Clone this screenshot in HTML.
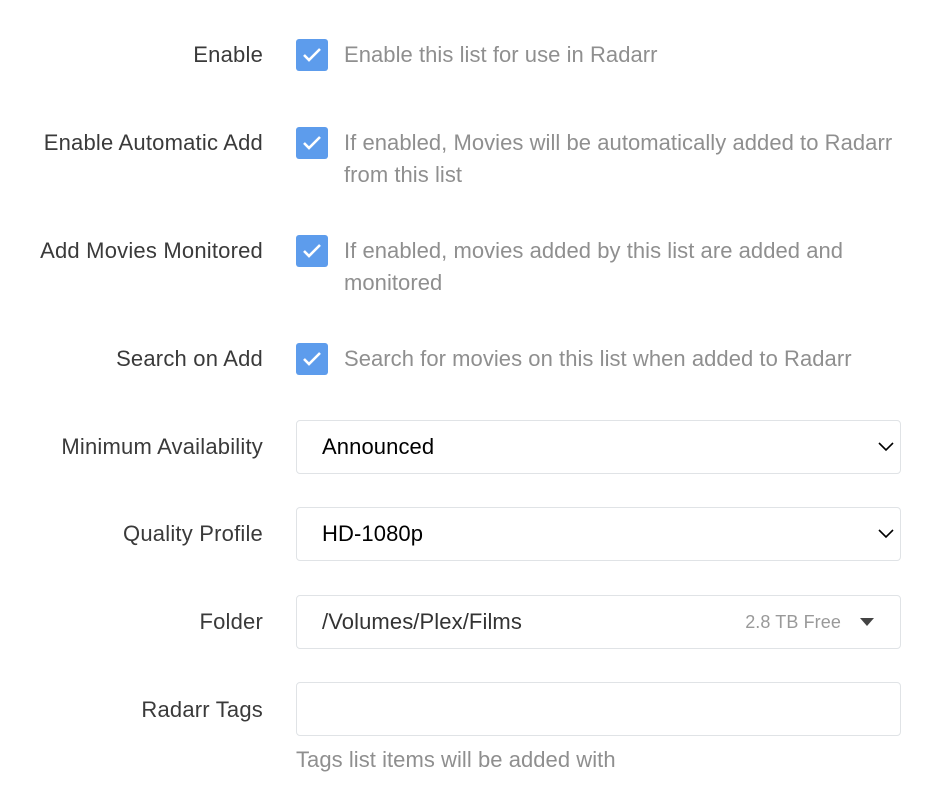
<!DOCTYPE html>
<html><head><style>
body{margin:0;background:#fff;font-family:"Liberation Sans",sans-serif;width:949px;height:800px;position:relative;overflow:hidden}
.l{position:absolute;right:686px;font-size:22px;letter-spacing:0.2px;color:#3a3a3a;line-height:32px;white-space:nowrap}
.cb{position:absolute;left:296px;width:32px;height:32px;border-radius:3px;background:#5d9cec}
.cb svg{position:absolute;left:6px;top:7px}
.t{position:absolute;left:344px;font-size:22px;letter-spacing:0.05px;color:#8f8f8f;line-height:32px;width:580px}
.in{position:absolute;left:296px;width:603px;height:52px;border:1px solid #e0e3e6;border-radius:4px;box-sizing:content-box}
.in span{position:absolute;left:25px;top:10px;font-size:22px;letter-spacing:0.1px;line-height:32px;color:#000}
.ch{position:absolute;right:6px;top:21px}
</style></head><body>
<div class="l" style="top:39px">Enable</div>
<div class="cb" style="top:39px"><svg width="20" height="18" viewBox="0 0 20 18"><path d="M2 9l5 5 11-11" fill="none" stroke="#fff" stroke-width="2.6"/></svg></div>
<div class="t" style="top:39px">Enable this list for use in Radarr</div>

<div class="l" style="top:127px">Enable Automatic Add</div>
<div class="cb" style="top:127px"><svg width="20" height="18" viewBox="0 0 20 18"><path d="M2 9l5 5 11-11" fill="none" stroke="#fff" stroke-width="2.6"/></svg></div>
<div class="t" style="top:127px">If enabled, Movies will be automatically added to Radarr<br>from this list</div>

<div class="l" style="top:235px">Add Movies Monitored</div>
<div class="cb" style="top:235px"><svg width="20" height="18" viewBox="0 0 20 18"><path d="M2 9l5 5 11-11" fill="none" stroke="#fff" stroke-width="2.6"/></svg></div>
<div class="t" style="top:235px">If enabled, movies added by this list are added and<br>monitored</div>

<div class="l" style="top:343px">Search on Add</div>
<div class="cb" style="top:343px"><svg width="20" height="18" viewBox="0 0 20 18"><path d="M2 9l5 5 11-11" fill="none" stroke="#fff" stroke-width="2.6"/></svg></div>
<div class="t" style="top:343px">Search for movies on this list when added to Radarr</div>

<div class="l" style="top:431px">Minimum Availability</div>
<div class="in" style="top:420px"><span>Announced</span><svg class="ch" width="16" height="10" viewBox="0 0 16 10"><path d="M1 1l7 7 7-7" fill="none" stroke="#000" stroke-width="1.6"/></svg></div>

<div class="l" style="top:518px">Quality Profile</div>
<div class="in" style="top:507px"><span>HD-1080p</span><svg class="ch" width="16" height="10" viewBox="0 0 16 10"><path d="M1 1l7 7 7-7" fill="none" stroke="#000" stroke-width="1.6"/></svg></div>

<div class="l" style="top:606px">Folder</div>
<div class="in" style="top:595px"><span style="color:#333">/Volumes/Plex/Films</span>
<span style="left:auto;right:59px;font-size:18px;color:#999;top:10px">2.8 TB Free</span>
<svg style="position:absolute;right:26px;top:22px" width="14" height="9" viewBox="0 0 14 9"><path d="M0 0h14L7 8z" fill="#444"/></svg></div>

<div class="l" style="top:694px">Radarr Tags</div>
<div class="in" style="top:682px"></div>
<div class="t" style="left:296px;top:744px">Tags list items will be added with</div>
</body></html>
